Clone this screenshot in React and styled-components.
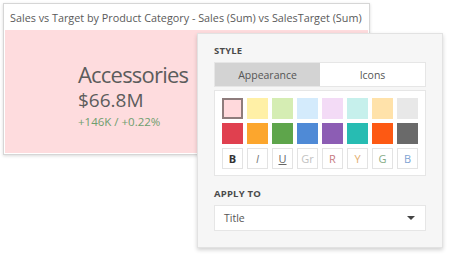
import React, { useState } from 'react';
import styled, { createGlobalStyle } from 'styled-components';

const GlobalStyle = createGlobalStyle`
  body {
    margin: 0;
    background: #ffffff;
    font-family: "Segoe UI", "Open Sans", "Noto Sans", sans-serif;
  }
`;

const Page = styled.div`
  position: relative;
  width: 474px;
  height: 263px;
  padding: 3px 0 0 3px;
  box-sizing: border-box;
  overflow: hidden;
`;

const Card = styled.div`
  width: 367px;
  height: 152px;
  border: 1px solid #d6d6d6;
  box-sizing: border-box;
  background: #ffffff;
  box-shadow: 0 1px 3px rgba(0, 0, 0, 0.15);
  display: flex;
  flex-direction: column;
`;

const CardTitle = styled.div`
  height: 26px;
  padding-left: 6px;
  display: flex;
  align-items: center;
  font-size: 10.8px;
  color: #5a5a5a;
  white-space: nowrap;
  overflow: hidden;
`;

const CardBody = styled.div`
  flex: 1;
  margin: 0 1px 1px 1px;
  background: #fedcde;
  padding: 29px 0 0 73px;
  color: #5c5c5c;
`;

const Name = styled.div`
  font-size: 22px;
  letter-spacing: -0.8px;
  line-height: 30px;
`;

const Value = styled.div`
  font-size: 19px;
  line-height: 22px;
`;

const Delta = styled.div`
  margin-top: 3px;
  font-size: 11.5px;
  color: #6e9e6e;
`;

const Popup = styled.div`
  position: absolute;
  left: 197px;
  top: 33px;
  width: 246px;
  height: 215px;
  box-sizing: border-box;
  background: #f6f6f6;
  border: 1px solid #e2e2e2;
  box-shadow: 0 2px 4px rgba(0, 0, 0, 0.18);
  padding: 12px 16px 0 16px;
`;

const Label = styled.div`
  font-size: 9.5px;
  font-weight: 700;
  color: #4a4a4a;
  letter-spacing: 0.2px;
  height: 16px;
  line-height: 10px;
`;

const Tabs = styled.div`
  display: flex;
  height: 25px;
  border: 1px solid #e6e6e6;
  box-sizing: border-box;
  background: #ffffff;
`;

const Tab = styled.div`
  flex: 1;
  display: flex;
  align-items: center;
  justify-content: center;
  font-size: 10.5px;
  color: #555;
  background: ${p => (p.$active ? '#d3d3d3' : '#ffffff')};
`;

const Palette = styled.div`
  margin-top: 3px;
  background: #ffffff;
  border: 1px solid #e6e6e6;
  padding: 7px 7px 6px 7px;
  display: grid;
  grid-template-columns: repeat(8, 21px);
  grid-auto-rows: 21px;
  column-gap: 4px;
  row-gap: 4px;
`;

const Swatch = styled.div`
  box-sizing: border-box;
  background: ${p => p.$color};
  border: ${p => (p.$selected ? '2px solid #8e7c7c' : 'none')};
`;

const FontBtn = styled.div`
  box-sizing: border-box;
  border: 1px solid #e3e3e3;
  display: flex;
  align-items: center;
  justify-content: center;
  font-size: 11px;
  color: ${p => p.$color};
  font-weight: ${p => (p.$bold ? 700 : 400)};
  font-style: ${p => (p.$italic ? 'italic' : 'normal')};
  text-decoration: ${p => (p.$underline ? 'underline' : 'none')};
`;

const ApplyLabel = styled(Label)`
  margin-top: 13px;
`;

const Select = styled.div`
  height: 26px;
  box-sizing: border-box;
  border: 1px solid #e6e6e6;
  background: #ffffff;
  display: flex;
  align-items: center;
  justify-content: space-between;
  padding: 0 10px 0 9px;
  font-size: 10.5px;
  color: #555;
`;

const Caret = styled.span`
  width: 0;
  height: 0;
  border-left: 4px solid transparent;
  border-right: 4px solid transparent;
  border-top: 4px solid #444;
`;

const light = ['#ffd9dc', '#fff0a6', '#d5edb3', '#d4ebfc', '#f3dbf6', '#c6f0ec', '#ffe2aa', '#e8e8e8'];
const dark = ['#e0404f', '#fca62d', '#5ea54b', '#4f8ad6', '#8c5db4', '#27bcb2', '#fd5913', '#6a6a6a'];
const fonts = [
  { t: 'B', c: '#333', bold: true },
  { t: 'I', c: '#777', italic: true },
  { t: 'U', c: '#666', underline: true },
  { t: 'Gr', c: '#c2c2c2' },
  { t: 'R', c: '#c77b82' },
  { t: 'Y', c: '#e3ae6e' },
  { t: 'G', c: '#86ab86' },
  { t: 'B', c: '#7fa3d3' },
];

const App = () => {
  const [tab, setTab] = useState('Appearance');

  return (
    <Page>
      <GlobalStyle />
      <Card>
        <CardTitle>Sales vs Target by Product Category - Sales (Sum) vs SalesTarget (Sum)</CardTitle>
        <CardBody>
          <Name>Accessories</Name>
          <Value>$66.8M</Value>
          <Delta>+146K / +0.22%</Delta>
        </CardBody>
      </Card>
      <Popup>
        <Label>STYLE</Label>
        <Tabs>
          {['Appearance', 'Icons'].map(t => (
            <Tab key={t} $active={tab === t} onClick={() => setTab(t)}>{t}</Tab>
          ))}
        </Tabs>
        <Palette>
          {light.map((c, i) => <Swatch key={'l' + i} $color={c} $selected={i === 0} />)}
          {dark.map((c, i) => <Swatch key={'d' + i} $color={c} />)}
          {fonts.map((f, i) => (
            <FontBtn key={'f' + i} $color={f.c} $bold={f.bold} $italic={f.italic} $underline={f.underline}>
              {f.t}
            </FontBtn>
          ))}
        </Palette>
        <ApplyLabel>APPLY TO</ApplyLabel>
        <Select>
          Title
          <Caret />
        </Select>
      </Popup>
    </Page>
  );
};

export default App;
